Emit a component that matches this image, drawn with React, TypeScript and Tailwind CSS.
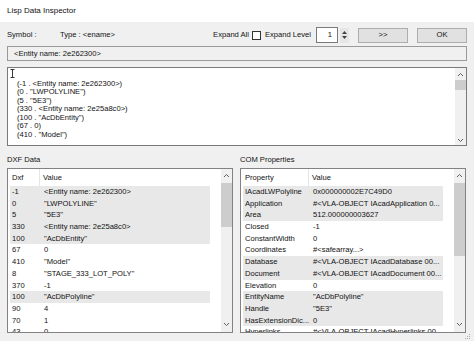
import React from "react";

const FONT = { fontFamily: '"Liberation Sans", Arial, sans-serif' };

type Row = [string, string, boolean];

const dxfRows: Row[] = [
  ["-1", "<Entity name: 2e262300>", true],
  ["0", '"LWPOLYLINE"', true],
  ["5", '"5E3"', true],
  ["330", "<Entity name: 2e25a8c0>", true],
  ["100", '"AcDbEntity"', true],
  ["67", "0", false],
  ["410", '"Model"', false],
  ["8", '"STAGE_333_LOT_POLY"', false],
  ["370", "-1", false],
  ["100", '"AcDbPolyline"', true],
  ["90", "4", false],
  ["70", "1", false],
  ["43", "0", false],
];

const comRows: Row[] = [
  ["IAcadLWPolyline", "0x000000002E7C49D0", true],
  ["Application", "#<VLA-OBJECT IAcadApplication 0...", true],
  ["Area", "512.000000003627", true],
  ["Closed", "-1", false],
  ["ConstantWidth", "0", false],
  ["Coordinates", "#<safearray...>", false],
  ["Database", "#<VLA-OBJECT IAcadDatabase 00...", true],
  ["Document", "#<VLA-OBJECT IAcadDocument 00...", true],
  ["Elevation", "0", false],
  ["EntityName", '"AcDbPolyline"', true],
  ["Handle", '"5E3"', true],
  ["HasExtensionDic...", "0", true],
  ["Hyperlinks", "#<VLA-OBJECT IAcadHyperlinks 00...", false],
];

const textLines = [
  "(-1 . <Entity name: 2e262300>)",
  '(0 . "LWPOLYLINE")',
  '(5 . "5E3")',
  "(330 . <Entity name: 2e25a8c0>)",
  '(100 . "AcDbEntity")',
  "(67 . 0)",
  '(410 . "Model")',
];

function ChevUp() {
  return (
    <svg width="7" height="5" viewBox="0 0 7 5">
      <polyline points="1,4 3.5,1.5 6,4" fill="none" stroke="#606060" strokeWidth="1" />
    </svg>
  );
}
function ChevDown() {
  return (
    <svg width="7" height="5" viewBox="0 0 7 5">
      <polyline points="1,1 3.5,3.5 6,1" fill="none" stroke="#606060" strokeWidth="1" />
    </svg>
  );
}

function ListPanel({
  rows,
  col1,
  col2,
  splitAt,
  rowStart,
  thumbH,
}: {
  rows: Row[];
  col1: string;
  col2: string;
  splitAt: number;
  rowStart: number;
  thumbH: number;
}) {
  return (
    <div className="flex h-[165px] border border-[#828282] bg-white">
      <div className="flex flex-1 flex-col overflow-hidden" style={{ paddingLeft: rowStart }}>
        <div className="flex h-[17px] w-[200px] shrink-0 items-center bg-white">
          <div className="flex h-full items-center border-r border-[#e5e5e5] pl-[2px]" style={{ width: splitAt }}>
            {col1}
          </div>
          <div className="pl-[3px]">{col2}</div>
        </div>
        {rows.map((r, i) => (
          <div
            key={i}
            className={`flex h-[11.7px] w-[200px] shrink-0 items-center whitespace-nowrap ${r[2] ? "bg-[#e8e8e8]" : "bg-white"}`}
          >
            <div className="shrink-0 pl-[2px]" style={{ width: splitAt + 4 }}>
              {r[0]}
            </div>
            <div>{r[1]}</div>
          </div>
        ))}
      </div>
      <div className="flex w-[11px] flex-col items-center bg-[#f0f0f0]">
        <div className="flex h-[13px] shrink-0 items-center justify-center">
          <ChevUp />
        </div>
        <div className="mt-[1px] w-full shrink-0 bg-[#cdcdcd]" style={{ height: thumbH }} />
        <div className="flex-1" />
        <div className="flex h-[10px] shrink-0 items-start justify-center">
          <ChevDown />
        </div>
      </div>
    </div>
  );
}

export default function App() {
  return (
    <div className="flex h-[341px] w-[474px] flex-col overflow-hidden bg-[#f0f0f0] text-[7.6px] leading-none text-[#111]" style={FONT}>
      {/* title bar */}
      <div className="flex h-[22px] shrink-0 items-center bg-white pl-[7px] text-[8px] text-[#111]">Lisp Data Inspector</div>

      {/* toolbar */}
      <div className="mt-[5px] flex h-[16px] shrink-0 items-center pl-[7px] pr-[7px]">
        <div className="w-[53px]">Symbol :</div>
        <div>Type : &lt;ename&gt;</div>
        <div className="ml-auto flex items-center">
          <span>Expand All</span>
          <div className="ml-[3px] h-[9px] w-[9px] border border-[#333] bg-white" />
          <span className="ml-[4px]">Expand Level</span>
          <div className="ml-[5px] flex h-[16px] w-[22px] items-center justify-end border border-[#7a7a7a] bg-white pr-[5px]">1</div>
          <div className="ml-[2px] flex h-[15px] w-[9px] flex-col items-center justify-center gap-[2px] bg-[#e6e6e6]">
            <svg width="5" height="3" viewBox="0 0 5 3">
              <polygon points="0,3 2.5,0 5,3" fill="#444" />
            </svg>
            <svg width="5" height="3" viewBox="0 0 5 3">
              <polygon points="0,0 2.5,3 5,0" fill="#444" />
            </svg>
          </div>
          <div className="ml-[9px] flex h-[15px] w-[50px] items-center justify-center border border-[#adadad] bg-[#e1e1e1]">&gt;&gt;</div>
          <div className="ml-[9px] flex h-[15px] w-[50px] items-center justify-center border border-[#adadad] bg-[#e1e1e1]">OK</div>
        </div>
      </div>

      {/* entity name field */}
      <div className="mx-[7px] mt-[3px] flex h-[15px] shrink-0 items-center border border-[#9a9a9a] bg-[#f0f0f0] pl-[6px]">
        &lt;Entity name: 2e262300&gt;
      </div>

      {/* text area */}
      <div className="mx-[7px] mt-[6px] flex h-[79px] shrink-0 border border-[#7a7a7a] bg-white">
        <div className="flex-1 pl-[2px] pt-[1px]">
          <div className="h-[10px]">
            <svg width="5" height="9" viewBox="0 0 5 9">
              <path d="M0.5 0.5 H4.5 M2.5 0.5 V8.5 M0.5 8.5 H4.5" stroke="#222" strokeWidth="0.9" fill="none" />
            </svg>
          </div>
          <div className="pl-[7px]">
            {textLines.map((l, i) => (
              <div key={i} className="flex h-[8.6px] items-center whitespace-nowrap">
                {l}
              </div>
            ))}
          </div>
        </div>
        <div className="flex w-[11px] flex-col items-center bg-[#f0f0f0]">
          <div className="flex h-[12px] items-center justify-center">
            <ChevUp />
          </div>
          <div className="h-[10px] w-full bg-[#cdcdcd]" />
          <div className="flex-1" />
          <div className="flex h-[10px] items-center justify-center">
            <ChevDown />
          </div>
        </div>
      </div>

      {/* lists */}
      <div className="mt-[6px] flex shrink-0 gap-[7px] px-[7px]">
        <div className="flex w-[226px] flex-col">
          <div className="flex h-[16px] items-center">DXF Data</div>
          <ListPanel rows={dxfRows} col1="Dxf" col2="Value" splitAt={30} rowStart={2} thumbH={44} />
        </div>
        <div className="flex w-[226px] flex-col">
          <div className="flex h-[16px] items-center">COM Properties</div>
          <ListPanel rows={comRows} col1="Property" col2="Value" splitAt={66} rowStart={2} thumbH={73} />
        </div>
      </div>

      <div className="flex flex-1 justify-end pr-[3px]">
        <svg width="7" height="7" viewBox="0 0 7 7">
          <rect x="5" y="1" width="1" height="1" fill="#aaa" />
          <rect x="3" y="3" width="1" height="1" fill="#aaa" />
          <rect x="5" y="3" width="1" height="1" fill="#aaa" />
          <rect x="1" y="5" width="1" height="1" fill="#aaa" />
          <rect x="3" y="5" width="1" height="1" fill="#aaa" />
          <rect x="5" y="5" width="1" height="1" fill="#aaa" />
        </svg>
      </div>
    </div>
  );
}
